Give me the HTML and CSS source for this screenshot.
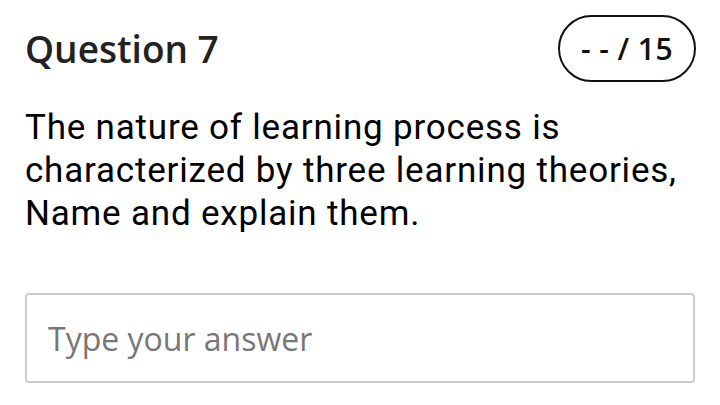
FILE: index.html
```html
<!DOCTYPE html>
<html>
<head>
<meta charset="utf-8">
<link rel="stylesheet" href="styles.css">
</head>
<body>
<div class="page">
  <div class="header">
    <h1 class="title">Question 7</h1>
    <div class="score">- - / 15</div>
  </div>
  <p class="question">The nature of learning process is characterized by three learning theories, Name and explain them.</p>
  <div class="answer">Type your answer</div>
</div>
</body>
</html>
```
FILE: styles.css
```css
html, body {
  margin: 0;
  padding: 0;
  background: #ffffff;
}
.page {
  width: 720px;
  height: 405px;
  box-sizing: border-box;
  padding: 15px 25px 0 25px;
  overflow: hidden;
}
.header {
  display: flex;
  justify-content: space-between;
  align-items: center;
  height: 67px;
}
.title {
  margin: 0;
  font-family: "Open Sans", sans-serif;
  font-weight: 600;
  font-size: 37px;
  color: #222222;
}
.score {
  box-sizing: border-box;
  height: 67px;
  width: 138px;
  border: 2px solid #111111;
  border-radius: 34px;
  display: flex;
  align-items: center;
  justify-content: center;
  font-family: "Open Sans", sans-serif;
  font-weight: 600;
  font-size: 30px;
  letter-spacing: 0.4px;
  color: #111111;
  margin-right: -1px;
}
.question {
  margin: 24px 0 0 0;
  font-family: Roboto, sans-serif;
  font-size: 35px;
  letter-spacing: 0.8px;
  line-height: 43px;
  color: #000000;
  width: 690px;
}
.answer {
  margin-top: 58px;
  box-sizing: border-box;
  height: 90px;
  border: 2px solid #cccccc;
  border-radius: 4px;
  padding-left: 21px;
  display: flex;
  align-items: center;
  font-family: "Open Sans", sans-serif;
  font-size: 32px;
  color: #777777;
}
```
